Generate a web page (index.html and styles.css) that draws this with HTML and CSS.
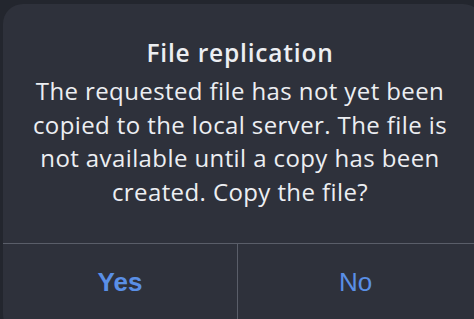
FILE: index.html
```html
<!DOCTYPE html>
<html>
<head>
<meta charset="utf-8">
<link rel="stylesheet" href="styles.css">
</head>
<body>
<div class="dialog">
  <div class="content">
    <div class="title">File replication</div>
    <div class="message">The requested file has not yet been<br>copied to the local server. The file is<br>not available until a copy has been<br>created. Copy the file?</div>
  </div>
  <div class="actions">
    <div class="btn yes">Yes</div>
    <div class="btn no">No</div>
  </div>
</div>
</body>
</html>
```

FILE: styles.css
```css
html, body {
  margin: 0;
  padding: 0;
  width: 474px;
  height: 319px;
  background: #23262e;
  overflow: hidden;
}
.dialog {
  box-sizing: border-box;
  margin: 4px 0 0 3px;
  width: 480px;
  height: 330px;
  background: #2e313b;
  border-radius: 20px;
  display: flex;
  flex-direction: column;
}
.content {
  height: 239px;
  box-sizing: border-box;
  padding: 33px 0 0 0;
  text-align: center;
  color: #eceef2;
  font-family: "Open Sans", "Noto Sans", sans-serif;
  white-space: nowrap;
}
.title {
  font-size: 24.5px;
  font-weight: 600;
  line-height: 32px;
  letter-spacing: 0.8px;
  padding-right: 6px;
}
.message {
  font-size: 24px;
  line-height: 33.7px;
  letter-spacing: 0.4px;
  margin-top: 5px;
  padding-right: 6px;
}
.actions {
  display: grid;
  grid-template-columns: 235px 1fr;
  border-top: 1.5px solid #5a5e69;
  height: 76px;
}
.btn {
  display: flex;
  align-items: center;
  justify-content: center;
  font-family: "Liberation Sans", Arial, sans-serif;
  font-size: 26px;
  color: #5a8fe6;
}
.yes {
  font-weight: 700;
  border-right: 1.5px solid #5a5e69;
}
.no {
  padding-right: 10px;
}
```
